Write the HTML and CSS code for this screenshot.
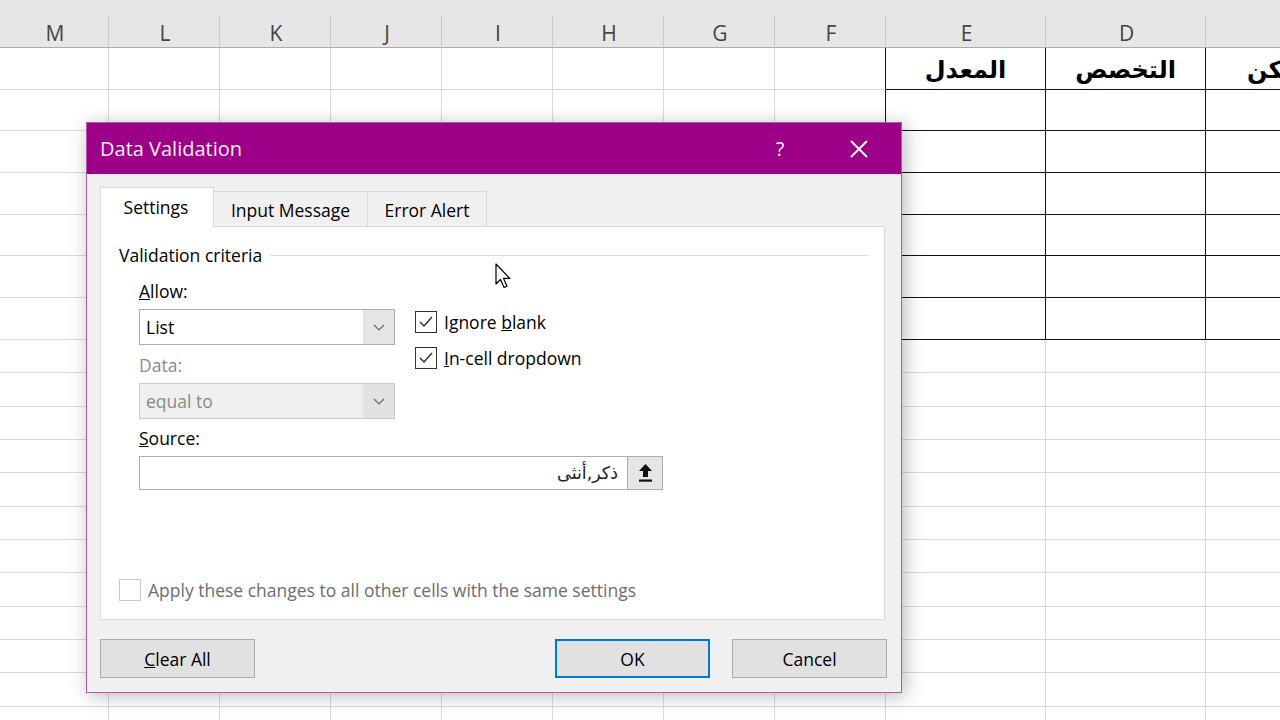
FILE: index.html
```html
<!DOCTYPE html>
<html lang="en">
<head>
<meta charset="utf-8">
<title>Data Validation</title>
<link rel="stylesheet" href="styles.css">
</head>
<body>
<div class="sheet">
  <div class="h"><span>M</span></div><div class="h"><span>L</span></div><div class="h"><span>K</span></div><div class="h"><span>J</span></div><div class="h"><span>I</span></div><div class="h"><span>H</span></div><div class="h"><span>G</span></div><div class="h"><span>F</span></div><div class="h"><span>E</span></div><div class="h"><span>D</span></div><div class="h"><span>C</span></div>

  <div class="c"></div><div class="c"></div><div class="c"></div><div class="c"></div><div class="c"></div><div class="c"></div><div class="c"></div><div class="c fb"></div><div class="t">المعدل</div><div class="t">التخصص</div><div class="t">السكن</div>
  <div class="c"></div><div class="c"></div><div class="c"></div><div class="c"></div><div class="c"></div><div class="c"></div><div class="c"></div><div class="c fb"></div><div class="t"></div><div class="t"></div><div class="t"></div>
  <div class="c"></div><div class="c"></div><div class="c"></div><div class="c"></div><div class="c"></div><div class="c"></div><div class="c"></div><div class="c fb"></div><div class="t"></div><div class="t"></div><div class="t"></div>
  <div class="c"></div><div class="c"></div><div class="c"></div><div class="c"></div><div class="c"></div><div class="c"></div><div class="c"></div><div class="c fb"></div><div class="t"></div><div class="t"></div><div class="t"></div>
  <div class="c"></div><div class="c"></div><div class="c"></div><div class="c"></div><div class="c"></div><div class="c"></div><div class="c"></div><div class="c fb"></div><div class="t"></div><div class="t"></div><div class="t"></div>
  <div class="c"></div><div class="c"></div><div class="c"></div><div class="c"></div><div class="c"></div><div class="c"></div><div class="c"></div><div class="c fb"></div><div class="t"></div><div class="t"></div><div class="t"></div>
  <div class="c"></div><div class="c"></div><div class="c"></div><div class="c"></div><div class="c"></div><div class="c"></div><div class="c"></div><div class="c fb"></div><div class="t"></div><div class="t"></div><div class="t"></div>

  <div class="c"></div><div class="c"></div><div class="c"></div><div class="c"></div><div class="c"></div><div class="c"></div><div class="c"></div><div class="c"></div><div class="c"></div><div class="c"></div><div class="c"></div>
  <div class="c"></div><div class="c"></div><div class="c"></div><div class="c"></div><div class="c"></div><div class="c"></div><div class="c"></div><div class="c"></div><div class="c"></div><div class="c"></div><div class="c"></div>
  <div class="c"></div><div class="c"></div><div class="c"></div><div class="c"></div><div class="c"></div><div class="c"></div><div class="c"></div><div class="c"></div><div class="c"></div><div class="c"></div><div class="c"></div>
  <div class="c"></div><div class="c"></div><div class="c"></div><div class="c"></div><div class="c"></div><div class="c"></div><div class="c"></div><div class="c"></div><div class="c"></div><div class="c"></div><div class="c"></div>
  <div class="c"></div><div class="c"></div><div class="c"></div><div class="c"></div><div class="c"></div><div class="c"></div><div class="c"></div><div class="c"></div><div class="c"></div><div class="c"></div><div class="c"></div>
  <div class="c"></div><div class="c"></div><div class="c"></div><div class="c"></div><div class="c"></div><div class="c"></div><div class="c"></div><div class="c"></div><div class="c"></div><div class="c"></div><div class="c"></div>
  <div class="c"></div><div class="c"></div><div class="c"></div><div class="c"></div><div class="c"></div><div class="c"></div><div class="c"></div><div class="c"></div><div class="c"></div><div class="c"></div><div class="c"></div>
  <div class="c"></div><div class="c"></div><div class="c"></div><div class="c"></div><div class="c"></div><div class="c"></div><div class="c"></div><div class="c"></div><div class="c"></div><div class="c"></div><div class="c"></div>
  <div class="c"></div><div class="c"></div><div class="c"></div><div class="c"></div><div class="c"></div><div class="c"></div><div class="c"></div><div class="c"></div><div class="c"></div><div class="c"></div><div class="c"></div>
  <div class="c"></div><div class="c"></div><div class="c"></div><div class="c"></div><div class="c"></div><div class="c"></div><div class="c"></div><div class="c"></div><div class="c"></div><div class="c"></div><div class="c"></div>
  <div class="c"></div><div class="c"></div><div class="c"></div><div class="c"></div><div class="c"></div><div class="c"></div><div class="c"></div><div class="c"></div><div class="c"></div><div class="c"></div><div class="c"></div>
  <div class="c"></div><div class="c"></div><div class="c"></div><div class="c"></div><div class="c"></div><div class="c"></div><div class="c"></div><div class="c"></div><div class="c"></div><div class="c"></div><div class="c"></div>
</div>

<div class="dialog">
  <div class="titlebar">
    <div class="title">Data Validation</div>
    <div class="tb-btn help">?</div>
    <div class="tb-btn close">
      <svg width="18" height="18" viewBox="0 0 18 18"><path d="M1 1 L17 17 M17 1 L1 17" stroke="#fff" stroke-width="1.8" fill="none"/></svg>
    </div>
  </div>
  <div class="dlg-body">
    <div class="tabs">
      <div class="tab active">Settings</div>
      <div class="tab w154">Input Message</div>
      <div class="tab w119">Error Alert</div>
    </div>
    <div class="panel">
      <div class="legend">Validation criteria</div>
      <div class="crit">
        <div class="crit-top">
          <div class="left-col">
            <div class="field-label"><u>A</u>llow:</div>
            <div class="select">
              <div class="val">List</div>
              <div class="dd"><svg width="12" height="7" viewBox="0 0 12 7"><polyline points="1,1 6,6 11,1" stroke="#666" stroke-width="1.2" fill="none"/></svg></div>
            </div>
            <div class="field-label dim gap9">Data:</div>
            <div class="select disabled">
              <div class="val">equal to</div>
              <div class="dd"><svg width="12" height="7" viewBox="0 0 12 7"><polyline points="1,1 6,6 11,1" stroke="#666" stroke-width="1.2" fill="none"/></svg></div>
            </div>
          </div>
          <div class="right-col">
            <div class="check">
              <span class="box"><svg width="20" height="20" viewBox="0 0 20 20"><polyline points="4,10 8,14 16,5" stroke="#333" stroke-width="1.5" fill="none"/></svg></span>
              <span>Ignore <u>b</u>lank</span>
            </div>
            <div class="check">
              <span class="box"><svg width="20" height="20" viewBox="0 0 20 20"><polyline points="4,10 8,14 16,5" stroke="#333" stroke-width="1.5" fill="none"/></svg></span>
              <span><u>I</u>n-cell dropdown</span>
            </div>
          </div>
        </div>
        <div class="field-label gap8"><u>S</u>ource:</div>
        <div class="source">
          <div class="src-val" dir="rtl">ذكر,أنثى</div>
          <div class="src-btn"><svg width="13" height="19" viewBox="0 0 13 19"><path d="M6.5 0 L13 7 L9 7 L9 13 L4 13 L4 7 L0 7 Z" fill="#111"/><rect x="0" y="15.5" width="13" height="2.2" fill="#111"/></svg></div>
        </div>
      </div>
      <div class="apply">
        <span class="box light"></span>
        <span>Apply these changes to all other cells with the same settings</span>
      </div>
    </div>
    <div class="buttons">
      <div class="btn"><u>C</u>lear All</div>
      <div class="spacer"></div>
      <div class="btn ok">OK</div>
      <div class="btn">Cancel</div>
    </div>
  </div>
</div>

<svg class="cursor" width="18" height="27" viewBox="0 0 18 27"><path d="M1 1 L1 21 L5.5 16.5 L9 24.5 L12 23.2 L8.6 15.4 L14.8 15.4 Z" fill="#fff" stroke="#000" stroke-width="1.2" stroke-linejoin="round"/></svg>
</body>
</html>
```

FILE: styles.css
```css
* { box-sizing: border-box; }
html, body { margin: 0; padding: 0; }
body {
  width: 1280px;
  height: 720px;
  overflow: hidden;
  position: relative;
  background: #fff;
  font-family: "Open Sans", "Noto Sans", sans-serif;
  color: #000;
}

/* spreadsheet */
.sheet {
  display: grid;
  grid-template-columns: 109px repeat(7, 111px) 160px 160px 160px;
  grid-template-rows: 48px 42px 41px 42px 42px 41px 42px 42px repeat(12, 33.33px);
  width: 1366px;
}
.h {
  background: #e6e6e6;
  display: flex;
  flex-direction: column;
}
.h span {
  margin-top: 16px;
  flex: 1;
  border-right: 1px solid #c9c9c9;
  border-bottom: 1px solid #ababab;
  display: flex;
  align-items: center;
  justify-content: center;
  padding-top: 3px;
  padding-left: 2px;
  font-size: 21px;
  color: #444;
}
.c {
  border-right: 1px solid #dadada;
  border-bottom: 1px solid #dadada;
}
.c.fb { border-right: 1px solid #111; }
.t {
  border-right: 1px solid #111;
  border-bottom: 1px solid #111;
  display: flex;
  align-items: center;
  justify-content: center;
  padding-top: 2px;
  font-family: "DejaVu Sans", sans-serif;
  font-weight: bold;
  font-size: 24px;
  direction: rtl;
  white-space: nowrap;
}

/* dialog */
.dialog {
  position: absolute;
  left: 86px;
  top: 122px;
  width: 816px;
  height: 571px;
  border: 1px solid #b356ac;
  background: #f0f0f0;
  box-shadow: 3px 3px 18px rgba(0, 0, 0, 0.28);
  display: flex;
  flex-direction: column;
}
.titlebar {
  height: 51px;
  flex-shrink: 0;
  background: #9b0086;
  display: flex;
  align-items: center;
  padding-left: 13px;
  padding-right: 22px;
  color: #fbeefa;
  font-size: 20px;
}
.title { flex: 1; }
.tb-btn {
  width: 40px;
  height: 40px;
  display: flex;
  align-items: center;
  justify-content: center;
}
.help { font-size: 20px; margin-right: 39px; }

.dlg-body {
  flex: 1;
  display: flex;
  flex-direction: column;
  padding: 13px 14px 14px 13px;
}
.tabs {
  display: flex;
  align-items: flex-end;
  height: 40px;
  margin-bottom: -1px;
  position: relative;
  z-index: 1;
}
.tab {
  height: 35px;
  margin-bottom: 1px;
  border: 1px solid #d9d9d9;
  border-bottom: none;
  border-left: none;
  background: #f0f0f0;
  display: flex;
  align-items: center;
  justify-content: center;
  font-size: 17.5px;
  padding-top: 1px;
}
.tab.active {
  width: 114px;
  height: 40px;
  margin-bottom: 0;
  background: #fff;
  border-left: 1px solid #d9d9d9;
  padding-top: 0;
  padding-bottom: 2px;
  padding-right: 2px;
}
.tab.w154 { width: 154px; }
.tab.w119 { width: 119px; }

.panel {
  height: 394px;
  flex-shrink: 0;
  background: #fff;
  border: 1px solid #d9d9d9;
  margin-right: 2px;
  display: flex;
  flex-direction: column;
  padding: 17px 15px 17px 18px;
  font-size: 17.5px;
}
.legend {
  display: flex;
  align-items: center;
  gap: 8px;
  height: 22px;
  line-height: 22px;
}
.legend::after {
  content: "";
  flex: 1;
  height: 1px;
  background: #dedede;
}
.crit {
  padding-left: 20px;
  margin-top: 14px;
}
.crit-top { display: flex; }
.left-col { width: 256px; }
.field-label {
  height: 22px;
  line-height: 22px;
}
.field-label.dim { color: #8a8a8a; }
.gap9 { margin-top: 9px; }
.gap8 { margin-top: 8px; }
.select {
  margin-top: 7px;
  width: 256px;
  height: 36px;
  border: 1px solid #adadad;
  background: #fff;
  display: flex;
}
.select .val {
  flex: 1;
  padding-left: 6px;
  display: flex;
  align-items: center;
}
.select .dd {
  width: 31px;
  background: #e5e5e5;
  display: flex;
  align-items: center;
  justify-content: center;
}
.select.disabled {
  background: #efefef;
  border-color: #cccccc;
  color: #8a8a8a;
}
.select.disabled .dd { background: #e2e2e2; }

.right-col {
  margin-left: 20px;
  padding-top: 31px;
  display: flex;
  flex-direction: column;
  gap: 14px;
}
.check {
  display: flex;
  align-items: center;
  gap: 7px;
  height: 22px;
}
.box {
  width: 22px;
  height: 22px;
  border: 1px solid #333;
  background: #fff;
  display: flex;
  align-items: center;
  justify-content: center;
  flex-shrink: 0;
}
.box.light { border-color: #c8c8c8; }

.source {
  margin-top: 7px;
  width: 524px;
  height: 34px;
  border: 1px solid #adadad;
  background: #fff;
  display: flex;
}
.src-val {
  flex: 1;
  padding-right: 9px;
  display: flex;
  align-items: center;
  font-family: "DejaVu Sans", sans-serif;
  font-size: 17.5px;
  color: #222;
}
.src-btn {
  width: 35px;
  background: #e5e5e5;
  border-left: 1px solid #adadad;
  display: flex;
  align-items: center;
  justify-content: center;
}

.apply {
  margin-top: auto;
  display: flex;
  align-items: center;
  gap: 7px;
  color: #6d6d6d;
}

.buttons {
  margin-top: 19px;
  display: flex;
  gap: 22px;
}
.spacer { flex: 1; }
.btn {
  width: 155px;
  height: 39px;
  background: #e1e1e1;
  border: 1px solid #adadad;
  display: flex;
  align-items: center;
  justify-content: center;
  font-size: 17.5px;
}
.btn.ok { border: 2px solid #0078d7; }

.cursor {
  position: absolute;
  left: 495px;
  top: 263px;
}
```
